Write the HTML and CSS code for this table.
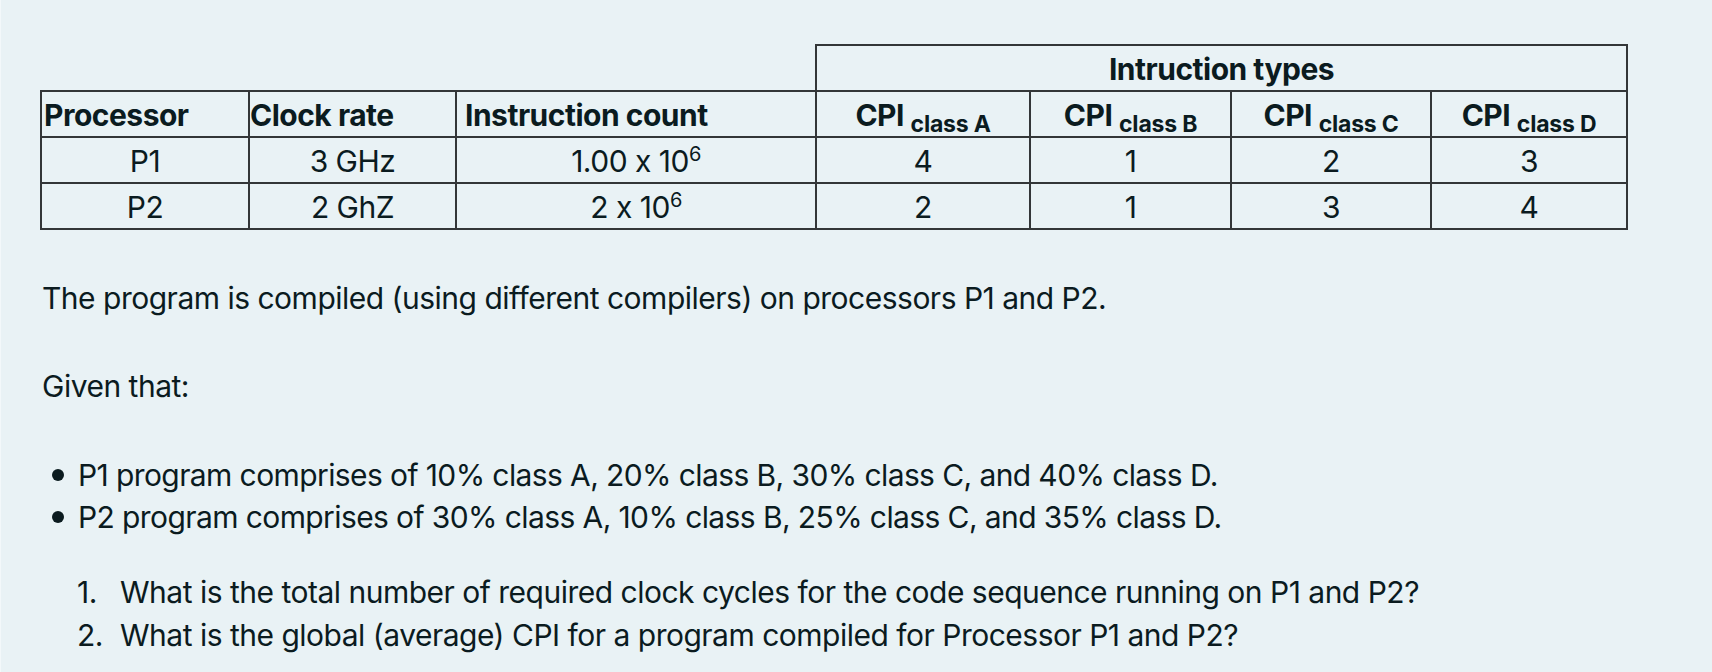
FILE: index.html
```html
<!DOCTYPE html>
<html>
<head>
<meta charset="utf-8">
<link rel="stylesheet" href="styles.css">
</head>
<body>
<div class="page">
  <table class="cpi-table">
    <colgroup>
      <col class="c1"><col class="c2"><col class="c3"><col class="c4"><col class="c5"><col class="c6"><col class="c7">
    </colgroup>
    <tr>
      <td class="blank" colspan="3"></td>
      <th class="center" colspan="4">Intruction types</th>
    </tr>
    <tr>
      <th class="left tight">Processor</th>
      <th class="left tight2">Clock rate</th>
      <th class="left pad">Instruction count</th>
      <th class="center">CPI <sub>class A</sub></th>
      <th class="center">CPI <sub>class B</sub></th>
      <th class="center">CPI <sub>class C</sub></th>
      <th class="center">CPI <sub>class D</sub></th>
    </tr>
    <tr>
      <td>P1</td><td>3 GHz</td><td>1.00 x 10<sup>6</sup></td><td>4</td><td>1</td><td>2</td><td>3</td>
    </tr>
    <tr>
      <td>P2</td><td>2 GhZ</td><td>2 x 10<sup>6</sup></td><td>2</td><td>1</td><td>3</td><td>4</td>
    </tr>
  </table>

  <p class="para first">The program is compiled (using different compilers) on processors P1 and P2.</p>
  <p class="para">Given that:</p>

  <ul class="bullets">
    <li>P1 program comprises of 10% class A, 20% class B, 30% class C, and 40% class D.</li>
    <li>P2 program comprises of 30% class A, 10% class B, 25% class C, and 35% class D.</li>
  </ul>

  <ol class="questions">
    <li>What is the total number of required clock cycles for the code sequence running on P1 and P2?</li>
    <li>What is the global (average) CPI for a program compiled for Processor P1 and P2?</li>
  </ol>
</div>
</body>
</html>
```

FILE: styles.css
```css
html, body {
  margin: 0;
  padding: 0;
}
body {
  background: #e9f2f5;
  color: #0b1b1f;
  font-family: "Inter", "Noto Sans", sans-serif;
  font-size: 30px;
  letter-spacing: -0.5px;
  width: 1712px;
  height: 672px;
  overflow: hidden;
  box-sizing: border-box;
  border-left: 1px solid #f3f8fa;
}
.page {
  padding: 44px 0 0 39px;
}
.cpi-table {
  border-collapse: collapse;
  table-layout: fixed;
  width: 1586px;
}
.c1 { width: 208px; }
.c2 { width: 207px; }
.c3 { width: 360px; }
.c4 { width: 214px; }
.c5 { width: 201px; }
.c6 { width: 200px; }
.c7 { width: 196px; }
.cpi-table tr {
  height: 46px;
}
.cpi-table th,
.cpi-table td {
  border: 2px solid #333638;
  padding: 2px 0 0 0;
  text-align: center;
  vertical-align: middle;
  line-height: 40px;
  white-space: nowrap;
}
.cpi-table th {
  font-weight: 700;
}
.cpi-table td.blank {
  border: none;
  border-bottom: 2px solid #333638;
}
.cpi-table th.left { text-align: left; }
.cpi-table th.tight { padding-left: 2px; }
.cpi-table th.tight2 { padding-left: 0; }
.cpi-table th.pad { padding-left: 8px; }
.cpi-table sub {
  font-size: 23px;
  letter-spacing: -0.2px;
  vertical-align: -6px;
  line-height: 0;
}
.cpi-table sup {
  font-size: 20px;
  vertical-align: 11px;
  line-height: 0;
}
.para {
  margin: 0;
  line-height: 42px;
  padding-left: 2px;
}
.para.first {
  margin-top: 47px;
  margin-bottom: 46px;
}
.bullets {
  margin: 47px 0 0 0;
  padding: 0 0 0 38px;
  line-height: 42px;
  letter-spacing: -0.6px;
}
.bullets li {
  list-style: none;
  position: relative;
}
.bullets li::before {
  content: "";
  position: absolute;
  left: -26px;
  top: 15px;
  width: 12px;
  height: 12px;
  border-radius: 50%;
  background: #0b1b1f;
}
.questions {
  margin: 33px 0 0 0;
  padding: 0 0 0 80px;
  line-height: 43px;
  list-style: none;
  counter-reset: q;
}
.questions li {
  counter-increment: q;
  position: relative;
}
.questions li::before {
  content: counter(q) ".";
  position: absolute;
  left: -43px;
}
```
